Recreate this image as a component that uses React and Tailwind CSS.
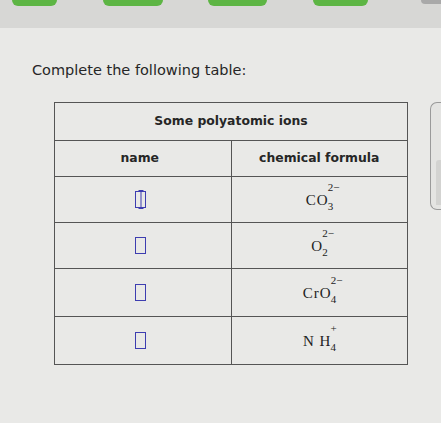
import React from 'react';

// Formula pieces: base letters, subscript and superscript stacked at the right
const Ion = ({ base, sub, sup }) => (
  <span className="relative inline-flex items-baseline font-['Liberation_Serif',serif] text-[15px] leading-none text-[#222]">
    <span className="tracking-[1px]">{base}</span>
    <span className="relative -ml-[1px] inline-block w-[17px] text-left text-[11px]">
      <span className="absolute left-0 top-[-14px]">{sup}</span>
      <span className="relative top-[5px]">{sub}</span>
    </span>
  </span>
);

const AnswerBox = ({ focused }) => (
  <div className="relative h-[17px] w-[11px] border-[1.5px] border-[#3d3db0]">
    {focused && (
      <div className="absolute left-1/2 top-[-2px] flex h-[19px] -translate-x-1/2 flex-col items-center">
        <div className="h-[1px] w-[5px] bg-[#3d3db0]" />
        <div className="w-[1px] flex-1 bg-[#3d3db0]" />
        <div className="h-[1px] w-[5px] bg-[#3d3db0]" />
      </div>
    )}
  </div>
);

const rows = [
  { base: 'CO', sub: '3', sup: '2−', focused: true, h: 'h-[46px]' },
  { base: 'O', sub: '2', sup: '2−', h: 'h-[46px]' },
  { base: 'CrO', sub: '4', sup: '2−', h: 'h-[48px]' },
  { base: 'N H', sub: '4', sup: '+', h: 'h-[48px]' },
];

const tabs = [
  'ml-[12px] w-[45px]',
  'ml-[46px] w-[60px]',
  'ml-[45px] w-[59px]',
  'ml-[46px] w-[55px]',
];

export default function App() {
  return (
    <div className="min-h-screen h-[423px] w-[441px] overflow-hidden bg-[#e9e9e7] font-['DejaVu_Sans',sans-serif] text-[#262626]">
      {/* top bar with green tab buttons */}
      <div className="flex h-[28px] items-start bg-[#d7d7d5]">
        {tabs.map((t, i) => (
          <div key={i} className={`${t} h-[6px] rounded-b-[6px] bg-[#5db544]`} />
        ))}
        <div className="ml-auto h-[4px] w-[20px] rounded-bl-[4px] bg-[#a9a9a9]" />
      </div>

      <div className="pl-[32px] pt-[32px] text-[14.5px] leading-[20px]">Complete the following table:</div>

      <div className="mt-[22px] flex items-start">
        <table className="ml-[54px] w-[354px] shrink-0 table-fixed border-collapse border-[1.5px] border-[#555] text-[12.4px]">
          <tbody>
            <tr className="h-[38px]">
              <td colSpan={2} className="border-[1.5px] border-[#555] text-center font-bold">
                Some polyatomic ions
              </td>
            </tr>
            <tr className="h-[36px]">
              <td className="w-[176px] border-[1.5px] border-[#555] pr-[6px] text-center font-bold">name</td>
              <td className="border-[1.5px] border-[#555] text-center font-bold">chemical formula</td>
            </tr>
            {rows.map((r, i) => (
              <tr key={i} className={r.h}>
                <td className="border-[1.5px] border-[#555]">
                  <div className="flex justify-center pr-[4px]">
                    <AnswerBox focused={r.focused} />
                  </div>
                </td>
                <td className="border-[1.5px] border-[#555] text-center">
                  <div className="flex justify-center pl-[12px] pt-[2px]">
                    <Ion base={r.base} sub={r.sub} sup={r.sup} />
                  </div>
                </td>
              </tr>
            ))}
          </tbody>
        </table>

        {/* side widget, cut off at the window edge */}
        <div className="ml-[22px] h-[108px] w-[30px] shrink-0 rounded-l-[7px] border-[1.5px] border-r-0 border-[#9a9a9a] bg-[#e4e4e2] pl-[5px] pt-[57px]">
          <div className="h-[45px] w-full rounded-tl-[3px] bg-[#d3d3d1]" />
        </div>
      </div>
    </div>
  );
}
